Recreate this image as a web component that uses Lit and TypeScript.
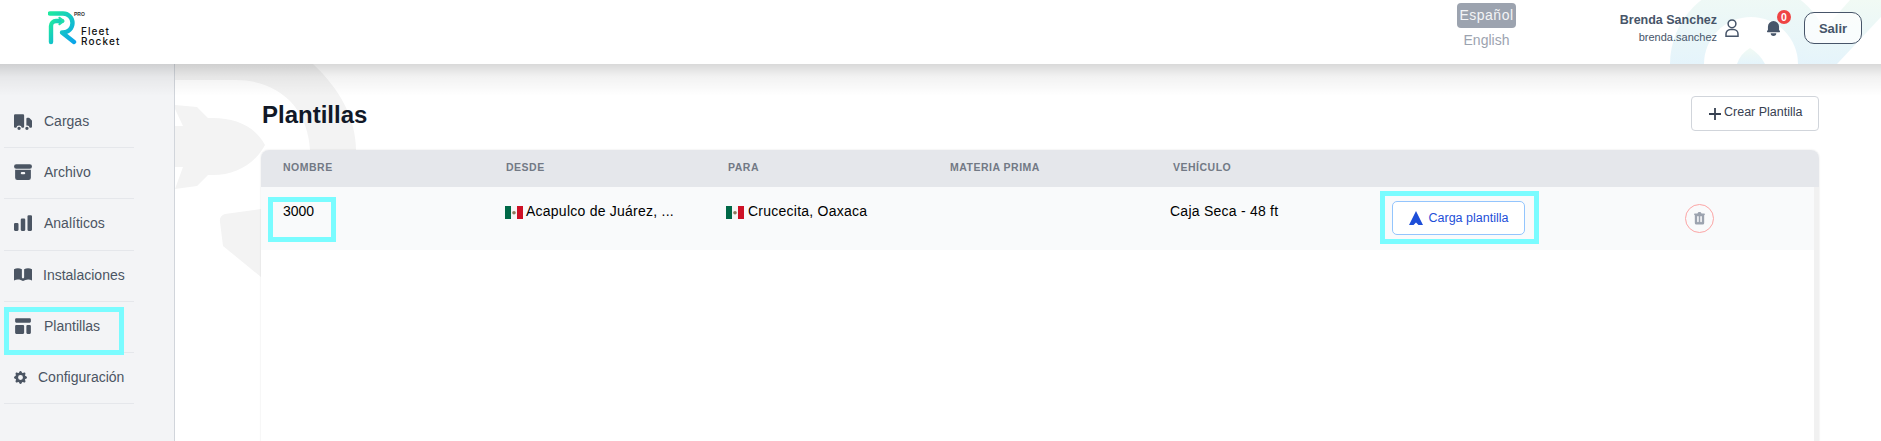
import { LitElement, css, html, svg } from 'lit';
import { customElement } from 'lit/decorators.js';

const navItems = [
	{ label: 'Cargas', icon: 'truck', gap: 12 },
	{ label: 'Archivo', icon: 'archive', gap: 12 },
	{ label: 'Analíticos', icon: 'chart', gap: 12 },
	{ label: 'Instalaciones', icon: 'book', gap: 11 },
	{ label: 'Plantillas', icon: 'layout', gap: 12 },
	{ label: 'Configuración', icon: 'cog', gap: 11 },
];

const icons: Record<string, unknown> = {
	truck: svg`<path d="M8 16.5a1.5 1.5 0 11-3 0 1.5 1.5 0 013 0zM15 16.5a1.5 1.5 0 11-3 0 1.5 1.5 0 013 0z"/><path d="M3 4a1 1 0 00-1 1v10a1 1 0 001 1h1.05a2.5 2.5 0 014.9 0H10a1 1 0 001-1V5a1 1 0 00-1-1H3zM14 7a1 1 0 00-1 1v6.05A2.5 2.5 0 0115.95 16H17a1 1 0 001-1v-5a1 1 0 00-.293-.707l-2-2A1 1 0 0015 7h-1z"/>`,
	archive: svg`<path d="M4 3a2 2 0 100 4h12a2 2 0 100-4H4z"/><path fill-rule="evenodd" d="M3 8h14v7a2 2 0 01-2 2H5a2 2 0 01-2-2V8zm5 3a1 1 0 011-1h2a1 1 0 110 2H9a1 1 0 01-1-1z"/>`,
	chart: svg`<path d="M2 11a1 1 0 011-1h2a1 1 0 011 1v5a1 1 0 01-1 1H3a1 1 0 01-1-1v-5zM8 7a1 1 0 011-1h2a1 1 0 011 1v9a1 1 0 01-1 1H9a1 1 0 01-1-1V7zM14 4a1 1 0 011-1h2a1 1 0 011 1v12a1 1 0 01-1 1h-2a1 1 0 01-1-1V4z"/>`,
	book: svg`<path d="M9 4.804A7.968 7.968 0 005.5 4c-1.255 0-2.443.29-3.5.804v10A7.969 7.969 0 015.5 14c1.669 0 3.218.51 4.5 1.385A7.962 7.962 0 0114.5 14c1.255 0 2.443.29 3.5.804v-10A7.968 7.968 0 0014.500 4c-1.255 0-2.443.29-3.500.804V12a1 1 0 11-2 0V4.804z"/>`,
	layout: svg`<path d="M3 4a1 1 0 011-1h12a1 1 0 011 1v2a1 1 0 01-1 1H4a1 1 0 01-1-1V4zM3 10a1 1 0 011-1h6a1 1 0 011 1v6a1 1 0 01-1 1H4a1 1 0 01-1-1v-6zM14 9a1 1 0 00-1 1v6a1 1 0 001 1h2a1 1 0 001-1v-6a1 1 0 00-1-1h-2z"/>`,
	cog: svg`<path fill-rule="evenodd" d="M11.49 3.17c-.38-1.56-2.6-1.56-2.98 0a1.532 1.532 0 01-2.286.948c-1.372-.836-2.942.734-2.106 2.106.54.886.061 2.042-.947 2.287-1.561.379-1.561 2.6 0 2.978a1.532 1.532 0 01.947 2.287c-.836 1.372.734 2.942 2.106 2.106a1.532 1.532 0 012.287.947c.379 1.561 2.6 1.561 2.978 0a1.533 1.533 0 012.287-.947c1.372.836 2.942-.734 2.106-2.106a1.533 1.533 0 01.947-2.287c1.561-.379 1.561-2.6 0-2.978a1.532 1.532 0 01-.947-2.287c.836-1.372-.734-2.942-2.106-2.106a1.532 1.532 0 01-2.287-.947zM10 13a3 3 0 100-6 3 3 0 000 6z"/>`,
};

@customElement('mx-flag')
export class MxFlag extends LitElement {
	static styles = css`
		:host {
			display: inline-flex;
			width: 18px;
			height: 13px;
			flex: none;
		}
		svg {
			display: block;
		}
	`;

	render() {
		return html`<svg width="18" height="13" viewBox="0 0 18 13">
			<rect width="6" height="13" fill="#006847"/>
			<rect x="6" width="6" height="13" fill="#f6f6f6"/>
			<rect x="12" width="6" height="13" fill="#ce1126"/>
			<circle cx="9" cy="6.800" r="1.800" fill="#8c7a5b"/>
		</svg>`;
	}
}

@customElement('side-nav')
export class SideNav extends LitElement {
	static styles = css`
		:host {
			display: block;
			width: 175px;
			flex: none;
			box-sizing: border-box;
			border-right: 1px solid #d1d5db;
			background: #f3f4f6;
			padding-top: 33px;
		}
		ul {
			list-style: none;
			margin: 0 0 0 4px;
			padding: 0;
			width: 130px;
		}
		li {
			display: flex;
			align-items: center;
			box-sizing: border-box;
			height: 51.200px;
			padding: 14px 0 16px 10px;
			border-bottom: 1px solid #e5e7eb;
			color: #4b5563;
			font-size: 14px;
			line-height: 20px;
		}
		svg {
			width: 18px;
			height: 18px;
			flex: none;
			fill: #4b5563;
		}
		svg.cog {
			width: 13px;
			height: 13px;
		}
	`;

	render() {
		return html`<ul>
			${navItems.map(
				(item) => html`<li>
					<svg class=${item.icon} viewBox="2 2 16 16">${icons[item.icon]}</svg>
					<span style="margin-left:${item.gap}px">${item.label}</span>
				</li>`
			)}
		</ul>`;
	}
}

@customElement('app-root')
export class AppRoot extends LitElement {
	static styles = css`
		:host {
			display: block;
			width: 1881px;
			height: 441px;
			overflow: hidden;
			position: relative;
			background: #fff;
			font-family: 'Liberation Sans', Arial, sans-serif;
		}

		header {
			position: relative;
			z-index: 2;
			height: 64px;
			display: flex;
			align-items: flex-start;
			background: #fff;
			overflow: hidden;
		}
		.logo {
			margin: 11px 0 0 48px;
			width: 80px;
			height: 36px;
			position: relative;
			flex: none;
		}
		.logo svg {
			display: block;
		}
		.logo-text {
			position: absolute;
			left: 33px;
			top: 16px;
			font-family: 'Inter', sans-serif;
			font-weight: 500;
			font-size: 10px;
			line-height: 9.500px;
			letter-spacing: 1.100px;
			color: #111;
		}
		.logo-pro {
			position: absolute;
			left: 26px;
			top: 0;
			font-size: 5px;
			line-height: 6px;
			font-weight: 700;
			color: #333;
		}
		.header-mark {
			position: absolute;
			right: 0;
			top: 0;
		}
		.langs {
			position: relative;
			margin-left: 1329px;
			margin-top: 3px;
			width: 59px;
			flex: none;
			display: flex;
			flex-direction: column;
			align-items: center;
			font-size: 14px;
			line-height: 20px;
		}
		.lang-on {
			box-sizing: border-box;
			width: 59px;
			height: 25px;
			background: #9ca3af;
			color: #f3f4f6;
			border-radius: 4px;
			line-height: 25px;
			letter-spacing: 0.500px;
			text-align: center;
		}
		.lang-off {
			color: #9ca3af;
			margin-top: 2px;
		}
		.user {
			position: relative;
			margin-left: 103px;
			margin-top: 13px;
			width: 98px;
			flex: none;
			text-align: right;
			color: #475569;
		}
		.user-name {
			font-weight: 700;
			font-size: 12.500px;
			line-height: 15px;
		}
		.user-login {
			font-size: 11px;
			line-height: 13px;
			margin-top: 3px;
		}
		.user-icon {
			position: relative;
			margin: 19px 0 0 8px;
			flex: none;
		}
		.bell {
			position: relative;
			margin: 21px 0 0 28px;
			width: 13px;
			flex: none;
		}
		.bell svg {
			display: block;
		}
		.bell-count {
			position: absolute;
			left: 10px;
			top: -11px;
			width: 14px;
			height: 14px;
			border-radius: 50%;
			background: #ef4444;
			color: #fff;
			font-size: 10.500px;
			font-weight: 700;
			line-height: 14px;
			text-align: center;
		}
		.logout {
			position: relative;
			margin: 12px 0 0 24px;
			width: 58px;
			height: 32px;
			box-sizing: border-box;
			border: 1px solid #475569;
			border-radius: 10px;
			background: rgba(255, 255, 255, 0.7);
			color: #475569;
			font-family: inherit;
			font-size: 13px;
			font-weight: 700;
			padding: 0;
			flex: none;
		}

		.body {
			display: flex;
			height: 377px;
			position: relative;
		}
		.shade {
			position: absolute;
			z-index: 1;
			left: 0;
			right: 0;
			top: 0;
			height: 32px;
			background: linear-gradient(rgba(0, 0, 0, 0.15), rgba(0, 0, 0, 0.05) 40%, rgba(0, 0, 0, 0));
			pointer-events: none;
		}
		main {
			position: relative;
			flex: 1;
			min-width: 0;
			padding: 32px 62px 0 86px;
			overflow: hidden;
		}
		.watermark {
			position: absolute;
			left: 0;
			top: 0;
		}
		.title-row {
			position: relative;
			display: flex;
			justify-content: space-between;
			align-items: flex-start;
			height: 54px;
		}
		h1 {
			margin: 0;
			padding: 3px 0 0 1px;
			font-size: 24px;
			line-height: 32px;
			font-weight: 700;
			color: #111827;
		}
		.create {
			display: flex;
			align-items: center;
			width: 128px;
			height: 35px;
			box-sizing: border-box;
			border: 1px solid #d1d5db;
			border-radius: 4px;
			background: #fff;
			color: #374151;
			font-family: inherit;
			font-size: 12.500px;
			padding: 0 0 3px 17px;
		}
		.create svg {
			margin: 3px 3px 0 0;
		}

		.table {
			position: relative;
			background: #fff;
			border-radius: 8px 8px 0 0;
			box-shadow: 0 0 2px rgba(0, 0, 0, 0.12);
			height: 400px;
			overflow: hidden;
		}
		.track {
			position: absolute;
			right: 0;
			top: 37px;
			bottom: 0;
			width: 5px;
			background: #f1f1f1;
		}
		.head,
		.row {
			display: grid;
			grid-template-columns: 245px 222px 222px 223px 1fr;
		}
		.head {
			height: 37px;
			background: #e5e7eb;
			color: #727985;
			font-size: 10.500px;
			font-weight: 700;
			letter-spacing: 0.500px;
			line-height: 34px;
		}
		.head span:first-child,
		.row > div:first-child {
			padding-left: 22px;
		}
		.row {
			height: 63px;
			margin-right: 5px;
			background: #f9fafb;
			color: #000;
			font-size: 14px;
			line-height: 20px;
			grid-template-columns: 244px 221px 222px 222px 222px 293px 1fr;
		}
		.cell {
			padding-top: 14px;
			display: flex;
			align-items: flex-start;
			gap: 3px;
			white-space: nowrap;
		}
		.spaced {
			letter-spacing: 0.240px;
		}
		.wide {
			gap: 4px;
		}
		.cell mx-flag {
			margin-top: 5px;
		}
		.load {
			display: flex;
			align-items: center;
			justify-content: center;
			gap: 6px;
			width: 133px;
			height: 34px;
			margin-top: 14px;
			box-sizing: border-box;
			border: 1px solid #93c5fd;
			border-radius: 5px;
			background: #fff;
			color: #1d4ed8;
			font-family: inherit;
			font-size: 12.500px;
			padding: 0;
		}
		.trash {
			width: 29px;
			height: 29px;
			margin-top: 17px;
			box-sizing: border-box;
			border: 1px solid #fca5a5;
			border-radius: 50%;
			display: flex;
			align-items: center;
			justify-content: center;
		}

		.mark {
			position: absolute;
			z-index: 3;
			box-sizing: border-box;
			border: 5px solid #7afcff;
			pointer-events: none;
		}
		.mark-nav {
			left: 4px;
			top: 307px;
			width: 120px;
			height: 48px;
		}
		.mark-name {
			left: 268px;
			top: 197px;
			width: 68px;
			height: 45px;
		}
		.mark-load {
			left: 1380px;
			top: 191px;
			width: 159px;
			height: 53px;
		}
	`;

	render() {
		return html`
			<header>
				<svg class="header-mark" width="281" height="64" viewBox="0 0 281 64" fill="none">
					<defs>
						<linearGradient id="hm" x1="0" y1="0" x2="0" y2="1">
							<stop offset="0" stop-color="#f1faf4"/>
							<stop offset="1" stop-color="#e5f4fb"/>
						</linearGradient>
					</defs>
					<path fill="url(#hm)" fill-rule="evenodd" d="M70 64A81 81 0 0 1 232 64zM104 64A47 47 0 0 1 198 64z"/>
					<path fill="url(#hm)" d="M200 64H237L281 17V0H250L210 45z"/>
					<path fill="url(#hm)" d="M150 48Q140 54 137 64H165Q160 54 150 48z"/>
				</svg>
				<div class="logo">
					<svg width="30" height="35" viewBox="0 0 30 35" fill="none">
						<defs>
							<linearGradient id="lg" x1="0" y1="0" x2="1" y2="1">
								<stop offset="0" stop-color="#1ee8a0"/>
								<stop offset="1" stop-color="#0ba5e9"/>
							</linearGradient>
						</defs>
						<path d="M2 2.500H15A9.500 9.500 0 0 1 15 21.500H14L26 31" stroke="url(#lg)" stroke-width="4.400" stroke-linecap="round" stroke-linejoin="round"/>
						<path d="M3 31V15A5 5 0 0 1 8 10H14" stroke="url(#lg)" stroke-width="4.400" stroke-linecap="round"/>
						<path d="M11.500 6.800L15.500 10L11.500 13.200" stroke="#20e0a8" stroke-width="2.200" stroke-linecap="round" stroke-linejoin="round"/>
					</svg>
					<span class="logo-pro">PRO</span>
					<div class="logo-text">Fleet<br />Rocket</div>
				</div>
				<div class="langs">
					<span class="lang-on">Español</span>
					<span class="lang-off">English</span>
				</div>
				<div class="user">
					<div class="user-name">Brenda Sanchez</div>
					<div class="user-login">brenda.sanchez</div>
				</div>
				<svg class="user-icon" width="14" height="18" viewBox="0 0 14 18" fill="none" stroke="#475569" stroke-width="1.500">
					<circle cx="7" cy="4.800" r="3.900"/>
					<path d="M1 17.200V15A4.500 4.500 0 0 1 5.500 10.500H8.500A4.500 4.500 0 0 1 13 15V17.200z"/>
				</svg>
				<div class="bell">
					<svg width="13" height="15" viewBox="3 2 14 16" fill="#475569">
						<path d="M10 2a6 6 0 00-6 6v3.586l-.707.707A1 1 0 004 14h12a1 1 0 00.707-1.707L16 11.586V8a6 6 0 00-6-6zM10 18a3 3 0 01-3-3h6a3 3 0 01-3 3z"/>
					</svg>
					<span class="bell-count">0</span>
				</div>
				<button class="logout">Salir</button>
			</header>
			<div class="body">
				<div class="shade"></div>
				<side-nav></side-nav>
				<main>
					<svg class="watermark" width="300" height="260" viewBox="0 0 300 260" fill="#f3f3f3">
						<path d="M0 0H138C165 25 181 55 181 86H135C133 45 105 16 60 16H0z"/>
						<path d="M0 41L22 43L33 54H38C60 54 80 62 90 81C80 100 60 111 38 111H33L22 122L0 125L8 103H0V62H8L0 45z"/>
						<path d="M86 145L50 150Q44 152 45 158L48 182L86 213z"/>
					</svg>
					<div class="title-row">
						<h1>Plantillas</h1>
						<button class="create">
							<svg width="12" height="12" viewBox="0 0 12 12" stroke="#374151" stroke-width="1.800" fill="none">
								<path d="M6 0v12M0 6h12"/>
							</svg>
							Crear Plantilla
						</button>
					</div>
					<div class="table">
						<div class="track"></div>
						<div class="head">
							<span>NOMBRE</span><span>DESDE</span><span>PARA</span><span>MATERIA PRIMA</span><span>VEHÍCULO</span>
						</div>
						<div class="row">
							<div class="cell">3000</div>
							<div class="cell spaced"><mx-flag></mx-flag>Acapulco de Juárez, ...</div>
							<div class="cell spaced wide"><mx-flag></mx-flag>Crucecita, Oaxaca</div>
							<div class="cell"></div>
							<div class="cell spaced">Caja Seca - 48 ft</div>
							<div>
								<button class="load">
									<svg width="14" height="14" viewBox="0 0 14 14" fill="#1d4ed8"><path d="M7 0L14 14H9.500L7 11.500L4.500 14H0z"/></svg>
									Carga plantilla
								</button>
							</div>
							<div>
								<div class="trash">
									<svg width="11" height="12.500" viewBox="3 2 14 16" fill="#9ca3af">
										<path fill-rule="evenodd" d="M9 2a1 1 0 00-.894.553L7.382 4H4a1 1 0 000 2v10a2 2 0 002 2h8a2 2 0 002-2V6a1 1 0 100-2h-3.382l-.724-1.447A1 1 0 0011 2H9zM7 8a1 1 0 012 0v6a1 1 0 11-2 0V8zm5-1a1 1 0 00-1 1v6a1 1 0 102 0V8a1 1 0 00-1-1z"/>
									</svg>
								</div>
							</div>
						</div>
					</div>
				</main>
			</div>
			<div class="mark mark-nav"></div>
			<div class="mark mark-name"></div>
			<div class="mark mark-load"></div>
		`;
	}
}
